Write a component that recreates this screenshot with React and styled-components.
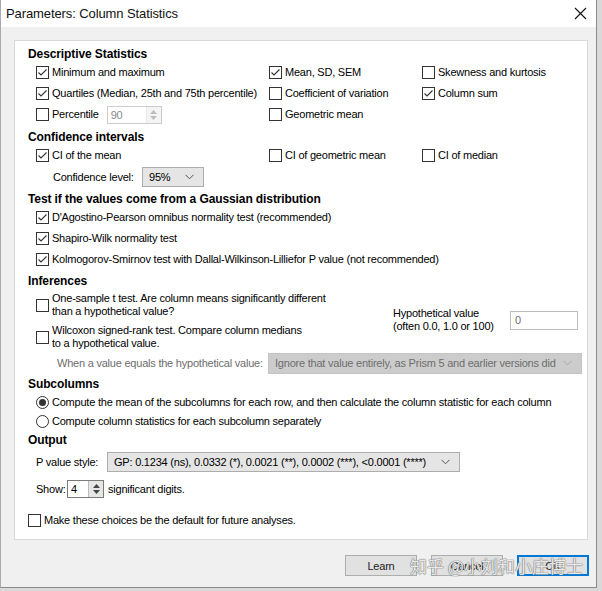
import React from 'react'
import styled, { createGlobalStyle } from 'styled-components'

const GlobalStyle = createGlobalStyle`
  html, body {
    margin: 0;
    padding: 0;
    background: #d9d9d9;
  }
  body {
    font-family: "Liberation Sans", Arial, sans-serif;
    font-size: 11px;
    letter-spacing: -0.22px;
    color: #000;
  }
`

const Window = styled.div`
  position: relative;
  width: 597px;
  height: 588px;
  background: #f0f0f0;
  border-left: 1px solid #aaa;
  border-right: 1px solid #8a8a8a;
  border-bottom: 1px solid #8a8a8a;
  display: flex;
  flex-direction: column;
  box-sizing: border-box;
`

const TitleBar = styled.div`
  height: 27px;
  background: #fff;
  display: flex;
  align-items: center;
  justify-content: space-between;
  padding: 0 9px 0 5px;
  font-size: 13px;
  letter-spacing: -0.1px;
  color: #111;
`

const Body = styled.div`
  flex: 1;
  padding: 13px 8px 0 13px;
  display: flex;
  flex-direction: column;
`

const Panel = styled.div`
  background: #fff;
  border: 1px solid #d9d9d9;
  height: 500px;
  box-sizing: border-box;
  padding: 4px 0 0 13px;
`

const Heading = styled.div`
  font-weight: bold;
  font-size: 12px;
  letter-spacing: -0.1px;
  height: 18px;
  line-height: 18px;
  margin-top: ${p => p.$mt || 0}px;
`

const Grid3 = styled.div`
  display: grid;
  grid-template-columns: 233px 153px 1fr;
  margin-left: 8px;
`

const Row = styled.div`
  display: flex;
  align-items: center;
  height: ${p => p.$h || 21}px;
  margin-left: ${p => p.$ml || 0}px;
  margin-top: ${p => p.$mt || 0}px;
  gap: ${p => p.$gap || 0}px;
  padding-bottom: ${p => p.$pb || 0}px;
  box-sizing: border-box;
  white-space: nowrap;
`

const Check = styled.label`
  display: flex;
  align-items: center;
  gap: 3px;
  height: ${p => p.$h || 21}px;
  padding-bottom: ${p => (p.$h ? 0 : 2)}px;
  box-sizing: border-box;
  white-space: nowrap;
`

const Box = styled.span`
  width: 13px;
  height: 13px;
  border: 1px solid #333;
  box-sizing: border-box;
  background: #fff;
  display: inline-flex;
  flex-shrink: 0;
`

const Label = styled.span`
  color: ${p => (p.$muted ? '#6d6d6d' : '#000')};
  line-height: 13px;
  width: ${p => (p.$w ? `${p.$w}px` : 'auto')};
  flex-shrink: 0;
`

const Spin = styled.div`
  display: flex;
  align-items: stretch;
  width: ${p => p.$w}px;
  height: 18px;
  border: 1px solid ${p => (p.$disabled ? '#ccc' : '#7a7a7a')};
  box-sizing: border-box;
  margin-left: ${p => p.$ml || 0}px;
  margin-right: ${p => p.$mr || 0}px;
  background: #fff;
`

const SpinValue = styled.span`
  flex: 1;
  padding-left: 3px;
  display: flex;
  align-items: center;
  color: ${p => (p.$disabled ? '#8a8a8a' : '#000')};
`

const SpinButtons = styled.span`
  width: 14px;
  display: flex;
  flex-direction: column;
  justify-content: center;
  align-items: center;
  background: ${p => (p.$disabled ? '#f4f4f4' : '#e6e6e6')};
  border-left: 1px solid ${p => (p.$disabled ? '#e8e8e8' : '#bcbcbc')};
  gap: 2px;
`

const Select = styled.div`
  display: flex;
  align-items: center;
  justify-content: space-between;
  width: ${p => p.$w}px;
  height: ${p => p.$h || 20}px;
  box-sizing: border-box;
  padding: 0 9px 0 6px;
  background: ${p => (p.$disabled ? '#cccccc' : '#e5e5e5')};
  border: 1px solid ${p => (p.$disabled ? '#c4c4c4' : '#adadad')};
  color: ${p => (p.$disabled ? '#6d6d6d' : '#000')};
  margin-left: ${p => p.$ml || 0}px;
  white-space: nowrap;
`

const TextInput = styled.div`
  width: 68px;
  height: 19px;
  box-sizing: border-box;
  border: 1px solid #bcbcbc;
  color: #6d6d6d;
  padding-left: 4px;
  display: flex;
  align-items: center;
`

const InferenceBlock = styled.div`
  display: grid;
  grid-template-columns: 357px 1fr;
  align-items: center;
  margin-left: 8px;
  margin-top: 2px;
`

const InferenceChecks = styled.div`
  display: flex;
  flex-direction: column;
  gap: 6px;
`

const Hypo = styled.div`
  display: grid;
  grid-template-columns: 117px 68px;
  align-items: center;
  margin-top: -2px;
`

const Radio = styled.span`
  width: 13px;
  height: 13px;
  border-radius: 50%;
  border: 1px solid #333;
  box-sizing: border-box;
  display: inline-flex;
  align-items: center;
  justify-content: center;
  flex-shrink: 0;
  &::after {
    content: "";
    width: 7px;
    height: 7px;
    border-radius: 50%;
    background: ${p => (p.$on ? '#333' : 'transparent')};
  }
`

const Footer = styled.div`
  display: flex;
  justify-content: flex-end;
  gap: 14px;
  padding: 15px 0 0 0;
  margin-right: -1px;
`

const Button = styled.div`
  width: 72px;
  height: 21px;
  box-sizing: border-box;
  background: #e1e1e1;
  border: ${p => (p.$primary ? '2px solid #0078d7' : '1px solid #adadad')};
  display: flex;
  align-items: center;
  justify-content: center;
  font-size: 11px;
  color: #222;
`

const Watermark = styled.div`
  position: absolute;
  left: 409px;
  top: 555px;
  font-family: "Noto Sans CJK SC", sans-serif;
  font-size: 17px;
  letter-spacing: 0;
  line-height: 22px;
  color: rgba(255, 255, 255, 0.85);
  text-shadow: 0 0 1px #777, 0 0 1px #777, 0 0 1px #999;
  white-space: nowrap;
  pointer-events: none;
`

const CheckMark = () => (
  <svg width="11" height="11" viewBox="0 0 11 11">
    <path d="M1.5 5.5 L4 8 L9.5 2.5" fill="none" stroke="#333" strokeWidth="1.1" />
  </svg>
)

const Chevron = ({ color = '#555' }) => (
  <svg width="9" height="6" viewBox="0 0 9 6">
    <path d="M0.5 0.8 L4.5 4.8 L8.5 0.8" fill="none" stroke={color} strokeWidth="1" />
  </svg>
)

const Tri = ({ up, color }) => (
  <svg width="7" height="4" viewBox="0 0 7 4">
    <path d={up ? 'M0 4 L3.5 0 L7 4 Z' : 'M0 0 L3.5 4 L7 0 Z'} fill={color} />
  </svg>
)

function CheckBox({ checked, children, h, muted }) {
  return (
    <Check $h={h}>
      <Box>{checked && <CheckMark />}</Box>
      {children && <Label $muted={muted}>{children}</Label>}
    </Check>
  )
}

function SpinBox({ value, w, disabled, ml, mr }) {
  const c = disabled ? '#bdbdbd' : '#444'
  return (
    <Spin $w={w} $disabled={disabled} $ml={ml} $mr={mr}>
      <SpinValue $disabled={disabled}>{value}</SpinValue>
      <SpinButtons $disabled={disabled}>
        <Tri up color={c} />
        <Tri color={c} />
      </SpinButtons>
    </Spin>
  )
}

export default function App() {
  return (
    <>
      <GlobalStyle />
      <Window>
        <TitleBar>
          <span>Parameters: Column Statistics</span>
          <svg width="13" height="13" viewBox="0 0 13 13">
            <path d="M1 1 L12 12 M12 1 L1 12" stroke="#111" strokeWidth="1.1" />
          </svg>
        </TitleBar>
        <Body>
          <Panel>
            <Heading>Descriptive Statistics</Heading>
            <Grid3>
              <CheckBox checked>Minimum and maximum</CheckBox>
              <CheckBox checked>Mean, SD, SEM</CheckBox>
              <CheckBox>Skewness and kurtosis</CheckBox>
              <CheckBox checked>Quartiles (Median, 25th and 75th percentile)</CheckBox>
              <CheckBox>Coefficient of variation</CheckBox>
              <CheckBox checked>Column sum</CheckBox>
              <Row $pb={1}>
                <CheckBox>Percentile</CheckBox>
                <SpinBox value="90" w={55} disabled ml={8} />
              </Row>
              <CheckBox>Geometric mean</CheckBox>
              <span />
            </Grid3>

            <Heading $mt={2}>Confidence intervals</Heading>
            <Grid3>
              <CheckBox checked>CI of the mean</CheckBox>
              <CheckBox>CI of geometric mean</CheckBox>
              <CheckBox>CI of median</CheckBox>
            </Grid3>
            <Row $ml={25} $pb={1}>
              <Label $w={89}>Confidence level:</Label>
              <Select $w={62}>
                <span>95%</span>
                <Chevron />
              </Select>
            </Row>

            <Heading $mt={2}>Test if the values come from a Gaussian distribution</Heading>
            <Row $ml={8}>
              <CheckBox checked>D'Agostino-Pearson omnibus normality test (recommended)</CheckBox>
            </Row>
            <Row $ml={8}>
              <CheckBox checked>Shapiro-Wilk normality test</CheckBox>
            </Row>
            <Row $ml={8}>
              <CheckBox checked>Kolmogorov-Smirnov test with Dallal-Wilkinson-Lilliefor P value (not recommended)</CheckBox>
            </Row>

            <Heading $mt={1}>Inferences</Heading>
            <InferenceBlock>
              <InferenceChecks>
                <CheckBox h={26}>
                  One-sample t test. Are column means significantly different
                  <br />
                  than a hypothetical value?
                </CheckBox>
                <CheckBox h={26}>
                  Wilcoxon signed-rank test. Compare column medians
                  <br />
                  to a hypothetical value.
                </CheckBox>
              </InferenceChecks>
              <Hypo>
                <Label>
                  Hypothetical value
                  <br />
                  (often 0.0, 1.0 or 100)
                </Label>
                <TextInput>0</TextInput>
              </Hypo>
            </InferenceBlock>
            <Row $ml={29} $h={22} $mt={2}>
              <Label $w={211} $muted>When a value equals the hypothetical value:</Label>
              <Select $w={314} $h={21} $disabled>
                <span>Ignore that value entirely, as Prism 5 and earlier versions did</span>
                <Chevron color="#a8a8a8" />
              </Select>
            </Row>

            <Heading $mt={1}>Subcolumns</Heading>
            <Row $ml={8} $h={19} $gap={3}>
              <Radio $on />
              <Label>Compute the mean of the subcolumns for each row, and then calculate the column statistic for each column</Label>
            </Row>
            <Row $ml={8} $h={19} $gap={3}>
              <Radio />
              <Label>Compute column statistics for each subcolumn separately</Label>
            </Row>

            <Heading>Output</Heading>
            <Row $ml={8} $h={22} $mt={2}>
              <Label $w={71}>P value style:</Label>
              <Select $w={353}>
                <span>GP: 0.1234 (ns), 0.0332 (*), 0.0021 (**), 0.0002 (***), &lt;0.0001 (****)</span>
                <Chevron />
              </Select>
            </Row>
            <Row $ml={8} $h={20} $mt={6}>
              <Label $w={31}>Show:</Label>
              <SpinBox value="4" w={37} mr={4} />
              <Label>significant digits.</Label>
            </Row>
            <Row $mt={12} $h={20}>
              <CheckBox>Make these choices be the default for future analyses.</CheckBox>
            </Row>
          </Panel>
          <Footer>
            <Button>Learn</Button>
            <Button>Cancel</Button>
            <Button $primary>OK</Button>
          </Footer>
        </Body>
        <Watermark>知乎 @小刘和小庄博士</Watermark>
      </Window>
    </>
  )
}
